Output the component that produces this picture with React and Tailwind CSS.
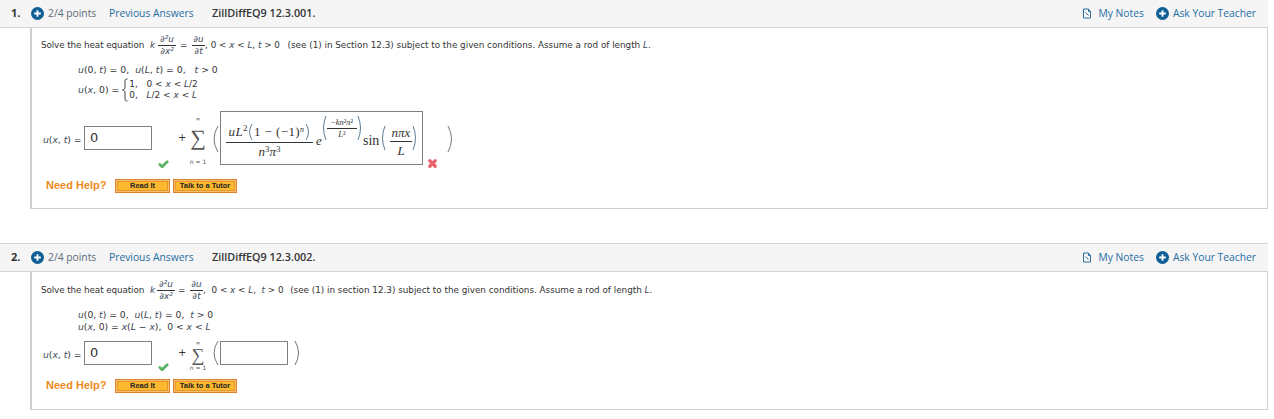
import React from 'react';
import { Check, X } from 'lucide-react';

function PlusCircle() {
  return (
    <svg width="13" height="13" viewBox="0 0 13 13" className="shrink-0">
      <circle cx="6.5" cy="6.5" r="6.5" fill="#0f5f94" />
      <path d="M6.5 3.2v6.6M3.2 6.5h6.6" stroke="#fff" strokeWidth="1.8" />
    </svg>
  );
}

function NoteIcon() {
  return (
    <svg width="10" height="11" viewBox="0 0 10 11" fill="none" stroke="#2f6f9f" strokeWidth="1" className="shrink-0">
      <path d="M1.5 1h5l2 2.5V10h-7z" />
      <path d="M3.5 4.5l3 3M6.5 1v2.5h2" />
    </svg>
  );
}

// curved bracket drawn to the height of what it wraps
function Paren({ h = 30, w = 6, right = false, color = '#5f7f95' }) {
  const d = right
    ? `M1 1 Q${w + 1} ${h / 2} 1 ${h - 1}`
    : `M${w - 1} 1 Q-1 ${h / 2} ${w - 1} ${h - 1}`;
  return (
    <svg width={w} height={h} viewBox={`0 0 ${w} ${h}`} fill="none" stroke={color} strokeWidth="1" className="shrink-0">
      <path d={d} />
    </svg>
  );
}

function Brace() {
  return (
    <svg width="6" height="24" viewBox="0 0 6 24" fill="none" stroke="#444" strokeWidth="1" className="ml-[3px] shrink-0">
      <path d="M5.5 1C3 1 3 2 3 4v5c0 2-1 3-2.5 3C2 12 3 13 3 15v5c0 2 0 3 2.5 3" />
    </svg>
  );
}

function Frac({ top, bottom, className = '' }) {
  return (
    <span className={`inline-flex flex-col items-center leading-[9px] ${className}`}>
      <span className="pb-px">{top}</span>
      <span className="pt-px border-t border-[#333] self-stretch text-center">{bottom}</span>
    </span>
  );
}

const I = ({ children }) => <i className="text-[#3b4a5a]">{children}</i>;

function Header({ num, title }) {
  return (
    <div className="h-[28px] flex items-center bg-[#f5f5f5] border-b border-[#d4d4d4] font-['Open_Sans',sans-serif] text-[10.3px]">
      <span className="w-[31px] pl-[11px] font-bold text-[11px] text-[#333]">{num}.</span>
      <PlusCircle />
      <span className="ml-[4px] w-[61px] text-[#5a6b78]">2/4 points</span>
      <span className="w-[103px] text-[#1f6da3]">Previous Answers</span>
      <span className="font-semibold text-[10.8px] text-[#333]">{title}</span>
      <div className="ml-auto flex items-center pr-[12px]">
        <NoteIcon />
        <span className="ml-[7px] text-[#1f6da3]">My Notes</span>
        <span className="ml-[12px]"><PlusCircle /></span>
        <span className="ml-[4px] text-[#1f6da3]">Ask Your Teacher</span>
      </div>
    </div>
  );
}

function HelpButton({ label, width }) {
  return (
    <span className={`${width} h-[14px] p-[1px] bg-[#f6bd6a] border border-[#d9822b] flex`}>
      <span className="flex-1 bg-[#fdb92e] border border-[#e9962f] flex items-center justify-center font-['Liberation_Sans',sans-serif] font-bold text-[7.5px] leading-none text-[#222]">
        {label}
      </span>
    </span>
  );
}

function HelpRow() {
  return (
    <div className="flex items-center pl-[5px] h-[15px]">
      <span className="w-[69px] font-['Liberation_Sans',sans-serif] font-bold text-[11px] text-[#ee8a1d]">Need Help?</span>
      <HelpButton label="Read It" width="w-[55px]" />
      <span className="w-[3px]" />
      <HelpButton label="Talk to a Tutor" width="w-[64px]" />
    </div>
  );
}

function AnswerInput() {
  return (
    <span className="w-[68px] h-[24px] border border-[#808080] bg-white flex items-center pl-[5px] font-['DejaVu_Sans',sans-serif] text-[13px] text-[#333]">
      0
    </span>
  );
}

function Question1() {
  return (
    <div className="mr-[6px]">
      <Header num={1} title="ZillDiffEQ9 12.3.001." />
      <div className="ml-[30px] h-[181px] border-l-2 border-r border-b border-[#cfcfcf] pl-[9px] pt-[8px] font-['DejaVu_Sans',sans-serif] text-[8.8px] text-[#333]">
        <div className="h-[19px] flex items-center whitespace-pre">
          <span className="w-[109px] tracking-[-0.1px]">Solve the heat equation</span>
          <I>k</I>
          <Frac className="ml-[3px] w-[18px]" top={<I>∂²u</I>} bottom={<I>∂x²</I>} />
          <span className="ml-[4px] w-[12px]">=</span>
          <Frac className="w-[13px]" top={<I>∂u</I>} bottom={<I>∂t</I>} />
          <span>, 0 &lt; <I>x</I> &lt; <I>L</I>, <I>t</I> &gt; 0<span className="ml-[2px]">  (see (1) in Section 12.3) subject to the given conditions. Assume a rod of length </span><I>L</I>.</span>
        </div>
        <div className="ml-[37px] mt-[9px] leading-[11px] whitespace-pre text-[9.3px]">
          <I>u</I>(0, <I>t</I>) = 0,  <I>u</I>(<I>L</I>, <I>t</I>) = 0,   <I>t</I> &gt; 0
        </div>
        <div className="ml-[37px] mt-[3px] flex items-center whitespace-pre text-[9.3px]">
          <span><I>u</I>(<I>x</I>, 0) =</span>
          <Brace />
          <div className="leading-[11px] ml-px text-[9px]">
            <div>1,   0 &lt; <I>x</I> &lt; <I>L</I>/2</div>
            <div>0,   <I>L</I>/2 &lt; <I>x</I> &lt; <I>L</I></div>
          </div>
        </div>
        <div className="mt-[9px] flex items-start h-[54px]">
          <span className="w-[41px] mt-[22px] ml-[2px] whitespace-pre text-[9.2px]"><I>u</I>(<I>x</I>, <I>t</I>) =</span>
          <span className="mt-[15px]"><AnswerInput /></span>
          <span className="w-[26px] self-end relative h-[10px]">
            <Check size={11} strokeWidth={6} color="#5cb264" className="absolute left-[6px] top-[4px]" />
          </span>
          <span className="mt-[21px] w-[8px] text-[10px] leading-[12px]">+</span>
          <span className="w-[24px] mt-[4px] flex flex-col items-center text-[#555]">
            <span className="text-[6px] leading-[7px]">∞</span>
            <span className="font-['Liberation_Serif',serif] text-[22px] leading-[20px] mt-[6px] mb-[10px]">∑</span>
            <span className="text-[6px] leading-[7px]"><i>n</i> = 1</span>
          </span>
          <span className="ml-[1px] mt-[14px]"><Paren h={28} w={8} color="#777" /></span>
          <div className="ml-[1px] w-[203px] h-[54px] border border-[#808080] flex items-start pl-[5px] whitespace-nowrap font-['Liberation_Serif',serif] text-[#333]">
            <Frac
              className="!leading-[16px] text-[13px] w-[87px] mt-[11px]"
              top={
                <span className="flex items-center tracking-[0.4px]">
                  <i>uL</i><sup className="text-[9px]">2</sup><Paren h={18} w={5} /><span className="mx-px">1 − (−1)<sup className="text-[8px]"><i>n</i></sup></span><Paren h={18} w={5} right />
                </span>
              }
              bottom={<span><i>n</i><sup className="text-[9px]">3</sup><i>π</i><sup className="text-[9px]">3</sup></span>}
            />
            <i className="text-[13px] leading-[14px] ml-[3px] mt-[22px] w-[6px]">e</i>
            <span className="flex items-center mt-[3px]">
              <Paren h={26} w={5} />
              <Frac className="text-[8.5px] w-[30px]" top={<span>−<i>kn</i>²<i>π</i>²</span>} bottom={<span><i>L</i>²</span>} />
              <Paren h={26} w={5} right />
            </span>
            <span className="text-[14px] leading-[14px] ml-px w-[18px] mt-[22px]">sin</span>
            <span className="flex items-start mt-[13px]">
              <Paren h={26} w={5} />
              <Frac className="!leading-[15px] text-[13px] w-[22px] ml-[4px]" top={<i>nπx</i>} bottom={<i>L</i>} />
              <Paren h={26} w={5} right />
            </span>
          </div>
          <span className="w-[10px] self-end relative h-[10px]">
            <X size={11} strokeWidth={7} color="#e8636a" className="absolute left-[4px] top-[3px]" />
          </span>
          <span className="ml-[14px] mt-[14px]"><Paren h={28} w={7} right color="#777" /></span>
        </div>
        <div className="mt-[13px]"><HelpRow /></div>
      </div>
    </div>
  );
}

function Question2() {
  return (
    <div className="mr-[6px] mt-[34px] border-t border-[#d4d4d4]">
      <Header num={2} title="ZillDiffEQ9 12.3.002." />
      <div className="ml-[30px] h-[138px] border-l-2 border-r border-b border-[#cfcfcf] pl-[9px] pt-[9px] font-['DejaVu_Sans',sans-serif] text-[8.8px] text-[#333]">
        <div className="h-[19px] flex items-center whitespace-pre">
          <span className="w-[109px] tracking-[-0.1px]">Solve the heat equation</span>
          <I>k</I>
          <Frac className="ml-[2px] w-[18px]" top={<I>∂²u</I>} bottom={<I>∂x²</I>} />
          <span className="ml-[3px] w-[12px]">=</span>
          <Frac className="w-[13px]" top={<I>∂u</I>} bottom={<I>∂t</I>} />
          <span>,  0 &lt; <I>x</I> &lt; <I>L</I>,  <I>t</I> &gt; 0<span className="ml-[1px]">  (see (1) in section 12.3) subject to the given conditions. Assume a rod of length </span><I>L</I>.</span>
        </div>
        <div className="ml-[37px] mt-[9px] leading-[12px] whitespace-pre text-[9.2px]">
          <div><I>u</I>(0, <I>t</I>) = 0,  <I>u</I>(<I>L</I>, <I>t</I>) = 0,  <I>t</I> &gt; 0</div>
          <div><I>u</I>(<I>x</I>, 0) = <I>x</I>(<I>L</I> − <I>x</I>),  0 &lt; <I>x</I> &lt; <I>L</I></div>
        </div>
        <div className="mt-[8px] flex items-start h-[30px]">
          <span className="w-[41px] mt-[7px] ml-[2px] whitespace-pre text-[9.2px]"><I>u</I>(<I>x</I>, <I>t</I>) =</span>
          <AnswerInput />
          <span className="w-[26px] self-end relative h-[10px]">
            <Check size={11} strokeWidth={6} color="#5cb264" className="absolute left-[6px] top-[1px]" />
          </span>
          <span className="mt-[6px] w-[8px] text-[10px] leading-[12px]">+</span>
          <span className="w-[24px] mt-[-2px] flex flex-col items-center text-[#555]">
            <span className="text-[6px] leading-[7px]">∞</span>
            <span className="font-['Liberation_Serif',serif] text-[18px] leading-[18px]">∑</span>
            <span className="text-[6px] leading-[7px]"><i>n</i> = 1</span>
          </span>
          <span className="ml-[1px] mt-[-1px]"><Paren h={26} w={8} color="#777" /></span>
          <span className="ml-[1px] w-[68px] h-[24px] border border-[#808080]" />
          <span className="ml-[6px] mt-[-1px]"><Paren h={26} w={7} right color="#777" /></span>
        </div>
        <div className="mt-[7px]"><HelpRow /></div>
      </div>
    </div>
  );
}

export default function App() {
  return (
    <div className="w-[1274px] h-[419px] bg-white overflow-hidden">
      <Question1 />
      <Question2 />
    </div>
  );
}
